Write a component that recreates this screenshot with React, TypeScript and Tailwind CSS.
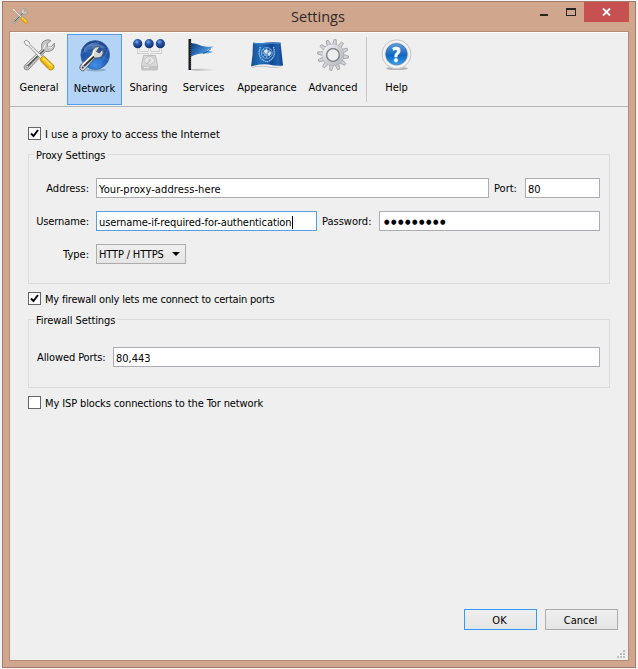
import type { ReactNode } from "react";

type ToolbarItem = {
    label: string;
    icon: ReactNode;
    width: string;
    active?: boolean;
};

function ToolsIcon({ className = "size-8" }: { className?: string }) {
    return (
        <svg viewBox="0 0 32 32" className={className}>
            <path d="M4 31Q1 31 1 28l1-2L19 10Q17 4 22 1.500q3-1.500 6 0L24 5l1 3 3 0 3.500-4q.5 5-2 7-3 2-7 1.500L7 29Q6 31 4 31Z" fill="#c4c4c4" stroke="#8a8a8a" strokeWidth=".9" />
            <path d="M4 27.500 21 10.500" stroke="#5c5c5c" strokeWidth="2.200" />
            <path d="m3.500 26 17-16 2-5" stroke="#f4f4f4" strokeWidth="1" fill="none" />
            <path d="m25 8 3 1 2-2" stroke="#eee" fill="none" />
            <circle cx="4.200" cy="27.700" r="1.200" fill="#eee" stroke="#555" strokeWidth=".5" />
            <path d="m1 3 2-2 3 2 .5 2L21 19l-2 2L5 6.500 3 6Z" fill="#f4f4f4" stroke="#8b8b8b" strokeWidth=".9" />
            <path d="m17 20 3-3.500 3 2.500 7.500 7q1.500 2-.5 4t-4 .5L18.500 23Z" fill="#f5bd12" stroke="#a57c13" strokeWidth=".8" />
            <path d="m20 19 9 8.500" stroke="#ffe675" strokeWidth="1.500" />
            <path d="m18 21.500 7.500 7.500" stroke="#c6860a" strokeWidth="1" />
        </svg>
    );
}

function NetworkIcon() {
    return (
        <svg viewBox="0 0 32 32" className="size-8">
            <defs>
                <radialGradient id="globe" cx=".5" cy=".85" r=".85">
                    <stop offset="0" stopColor="#3f91ed" />
                    <stop offset=".45" stopColor="#2260b9" />
                    <stop offset="1" stopColor="#1b3f80" />
                </radialGradient>
            </defs>
            <ellipse cx="17" cy="30" rx="10" ry="1.500" fill="#6e8eb5" opacity=".6" />
            <circle cx="16.200" cy="15" r="14.400" fill="url(#globe)" stroke="#3d65a5" strokeWidth=".7" />
            <path d="M3.500 14Q8 2 20 2.500M8 6q10-3 19 4M12 4q9 7 10 24M4 12q10-2 25 8M29 9q-3 12-14 18" fill="none" stroke="#5282ca" strokeWidth=".6" />
            <path d="M5 8q10-10 22 0-11-2-22 4Z" fill="#a9c5f2" opacity=".3" />
            <path d="M1 29Q0 27 2.500 24L12.500 14.500q0-5 4-7.500l4.500-.5-3.500 5 3 1.500 3-4q2 4.500-1 7.500-2 2-6.500 1.500L6 29.500q-2.500 3-5-.5Z" fill="#d4d6d7" stroke="#4c535b" strokeWidth=".9" />
            <path d="m5 26 10-9.500" stroke="#33383d" strokeWidth="2" />
            <path d="m4 24.500 10-9.500 1.500-5" fill="none" stroke="#fff" strokeWidth="1.200" />
            <circle cx="3.700" cy="27.500" r="1" fill="#26384f" />
        </svg>
    );
}

function SharingIcon() {
    return (
        <svg viewBox="0 0 32 32" className="size-8">
            <defs>
                <radialGradient id="ball" cx=".4" cy=".3" r=".7">
                    <stop offset="0" stopColor="#7aa4e4" />
                    <stop offset=".4" stopColor="#2857ab" />
                    <stop offset="1" stopColor="#102d6a" />
                </radialGradient>
            </defs>
            <path d="M5.500 8v5.500h22V8M16.500 7v11" fill="none" stroke="#c2c2c2" strokeWidth="3" />
            <path d="M5.500 8v5.500h22V8M16.500 7v11" fill="none" stroke="#f3f3f3" strokeWidth="1.600" />
            <circle cx="4.700" cy="4.700" r="4.600" fill="url(#ball)" />
            <circle cx="16.200" cy="4.700" r="4.600" fill="url(#ball)" />
            <circle cx="27.400" cy="4.700" r="4.600" fill="url(#ball)" />
            <path d="M10.500 16.500h12l2 9.500v4q0 1-1 1h-14q-1 0-1-1v-4Z" fill="#d8d8d8" stroke="#adadad" strokeWidth=".7" />
            <ellipse cx="16.500" cy="21.500" rx="5" ry="3.700" fill="#e8e8e8" stroke="#bbb" strokeWidth=".7" />
            <circle cx="16.500" cy="21" r="1.200" fill="#c4c4c4" />
            <path d="m13 25 4-3" stroke="#b5b5b5" />
            <path d="M9 27h15v3.500H9Z" fill="#c3c3c3" />
            <path d="M11 28.500h5" stroke="#eee" />
        </svg>
    );
}

function ServicesIcon() {
    return (
        <svg viewBox="0 0 32 32" className="size-8">
            <defs>
                <linearGradient id="pennant" x2="1" y2=".5">
                    <stop offset="0" stopColor="#143d70" />
                    <stop offset=".45" stopColor="#2a6cb6" />
                    <stop offset="1" stopColor="#5eaaf0" />
                </linearGradient>
                <linearGradient id="pole-shadow">
                    <stop offset="0" stopColor="#aaa" />
                    <stop offset="1" stopColor="#eee" />
                </linearGradient>
            </defs>
            <ellipse cx="15" cy="30.800" rx="12" ry="1" fill="url(#pole-shadow)" />
            <path d="M3 4q6 .5 11 3 5 1.500 11.500.2-3 2.300-6.500 4.300l6.500 1.500q-5 1.500-10 1.500-5-.5-12.500 3Z" fill="url(#pennant)" />
            <path d="M15 14.500q5-1.500 8-5" fill="none" stroke="#194a84" strokeWidth=".8" />
            <path d="M1.800 0v31" stroke="#151a1e" strokeWidth="2.600" />
            <path d="M2.400 2v28" stroke="#59636a" strokeWidth=".7" strokeDasharray="1 1" />
        </svg>
    );
}

function AppearanceIcon() {
    return (
        <svg viewBox="0 0 32 32" className="size-8">
            <defs>
                <linearGradient id="flag">
                    <stop offset="0" stopColor="#174c92" />
                    <stop offset=".3" stopColor="#2270bd" />
                    <stop offset=".65" stopColor="#114a96" />
                    <stop offset=".85" stopColor="#2062b0" />
                    <stop offset="1" stopColor="#0b3d84" />
                </linearGradient>
            </defs>
            <path d="M1 28q7-2 14-1 9 2 16 0l-1 1q-7 2-15 0-7-1-14 1Z" fill="#aaa" opacity=".6" />
            <path d="M2 3.500q7 1 13 0 8-.5 14.500 0l2.500 23q-7 1-14-1-8-1-18 2Q2 16 2 3.500Z" fill="url(#flag)" />
            <path d="M2 4.500q7 1 13 0 8-.5 15 0" fill="none" stroke="#4e8dca" strokeWidth=".8" />
            <g fill="none" stroke="#8fb8e2" strokeWidth=".8">
                <circle cx="15.800" cy="14" r="5.500" />
                <circle cx="15.800" cy="14" r="3" />
                <path d="M10.500 14h10.600M15.800 9v10M12 10l7.600 8M19.500 10l-7.500 8" />
                <path d="M9.500 8q-4.500 11 6.500 15Q26 19 22.500 8" strokeWidth="1.500" strokeDasharray="1.500 .6" />
            </g>
            <path d="m12.500 12 3-2 1.500 2-2 3Zm4 3 3-3 .5 3-2 2Z" fill="#d8e8f8" />
        </svg>
    );
}

const gearTeeth = [0, 30, 60, 90, 120, 150, 180, 210, 240, 270, 300, 330];

function AdvancedIcon() {
    return (
        <svg viewBox="0 0 32 32" className="size-8">
            <defs>
                <linearGradient id="gear" x2="1" y2="1">
                    <stop offset="0" stopColor="#f2f2f5" />
                    <stop offset=".5" stopColor="#cfd0d6" />
                    <stop offset="1" stopColor="#b9bac1" />
                </linearGradient>
            </defs>
            {gearTeeth.map((angle) => (
                <path
                    key={angle}
                    d="M14 6 14.900.5h2.200L18 6Z"
                    transform={`rotate(${angle + 8} 16 16)`}
                    fill="#d2d2d8"
                    stroke="#96969e"
                    strokeWidth=".7"
                />
            ))}
            <circle cx="16" cy="16" r="8.800" fill="none" stroke="#96969e" strokeWidth="4.600" />
            <circle cx="16" cy="16" r="8.800" fill="none" stroke="url(#gear)" strokeWidth="4" />
            <circle cx="16" cy="16" r="6.300" fill="#efefef" stroke="#7f8088" strokeWidth="1.300" />
        </svg>
    );
}

function HelpIcon() {
    return (
        <svg viewBox="0 0 32 32" className="size-8">
            <defs>
                <linearGradient id="help" x2="0" y2="1">
                    <stop offset="0" stopColor="#5e9cdc" />
                    <stop offset=".5" stopColor="#1a6cc2" />
                    <stop offset=".55" stopColor="#0b66c0" />
                    <stop offset="1" stopColor="#38a2ef" />
                </linearGradient>
            </defs>
            <ellipse cx="16" cy="29.500" rx="11" ry="1.600" fill="#b4b4b4" />
            <circle cx="15.500" cy="15.200" r="14.500" fill="#e4e4e4" stroke="#cacaca" />
            <circle cx="15.500" cy="15.200" r="12.800" fill="none" stroke="#f7f7f7" strokeWidth="1.300" />
            <circle cx="15.500" cy="15.200" r="10.800" fill="url(#help)" stroke="#3973b2" strokeWidth=".6" />
            <text x="15.500" y="22.500" textAnchor="middle" fill="#fff" stroke="#fff" strokeWidth=".5" className="font-['Open_Sans',sans-serif] text-[21px] font-bold">
                ?
            </text>
        </svg>
    );
}

const toolbarItems: ToolbarItem[] = [
    { label: "General", icon: <ToolsIcon />, width: "w-14" },
    { label: "Network", icon: <NetworkIcon />, width: "w-[55px]", active: true },
    { label: "Sharing", icon: <SharingIcon />, width: "w-[53px]" },
    { label: "Services", icon: <ServicesIcon />, width: "w-[57px]" },
    { label: "Appearance", icon: <AppearanceIcon />, width: "w-[70px]" },
    { label: "Advanced", icon: <AdvancedIcon />, width: "w-[62px]" },
];

function ToolbarButton({ item }: { item: ToolbarItem }) {
    return (
        <button
            className={`flex h-[71px] shrink-0 flex-col items-center border ${item.width} ${
                item.active ? "border-[#569de5] bg-[#b3d4f4] pt-[5px]" : "border-transparent pt-1"
            }`}
        >
            {item.icon}
            <span className="mt-[9px] whitespace-nowrap leading-4">{item.label}</span>
        </button>
    );
}

function CheckRow({ label, tracking, checked }: { label: string; tracking?: string; checked?: boolean }) {
    return (
        <label className="flex h-[13px] items-center gap-1">
            <span className="size-[13px] shrink-0 border border-[#646464] bg-white">
                {checked && (
                    <svg viewBox="0 0 11 11" className="size-[11px]">
                        <path d="M2 5.500 4.500 8 9 2" fill="none" stroke="#000" strokeWidth="2" />
                    </svg>
                )}
            </span>
            <span className={`pt-0.5 whitespace-nowrap ${tracking ?? ""}`}>{label}</span>
        </label>
    );
}

function Field({ value, width, text, focused }: { value: string; width: string; text?: string; focused?: boolean }) {
    return (
        <div
            className={`flex h-5 shrink-0 items-center border bg-white pt-0.5 whitespace-nowrap ${width} ${text ?? "pl-0.5"} ${
                focused ? "border-[#569de5]" : "border-[#abadb3]"
            }`}
        >
            {value}
            {focused && <span className="h-[13px] w-px bg-black" />}
        </div>
    );
}

function Group({ title, height, children }: { title: string; height: string; children: ReactNode }) {
    return (
        <section className={`w-[582px] border border-[#dcdcdc] ${height}`}>
            <h2 className="-mt-[7px] ml-[5px] h-[15px] w-fit bg-[#efefef] px-0.5 leading-[15px] tracking-[-0.1px]">{title}</h2>
            {children}
        </section>
    );
}

export default function App() {
    return (
        <div className="h-[669px] w-[638px] overflow-hidden bg-[#f4f4f4] pt-px pl-0.5 font-['DejaVu_Sans_Condensed','DejaVu_Sans',sans-serif] text-[11px] leading-[13px] text-black [font-stretch:condensed]">
            <div className="flex h-[667px] w-[634px] flex-col border border-[#a07c69] bg-[#d0a68c]">
                <header className="flex h-[29px] shrink-0 pr-1.5">
                    <div className="w-[100px] pt-1.5 pl-[9px]">
                        <ToolsIcon className="size-4" />
                    </div>
                    <h1 className="grow pt-1 text-center font-['Open_Sans',sans-serif] text-[14.500px] leading-[22px] text-[#2b2b2b] [font-stretch:normal]">
                        Settings
                    </h1>
                    <div className="flex w-[96px]">
                        <span className="mt-3 ml-[7px] h-0.5 w-2 bg-[#252525]" />
                        <span className="mt-[6px] ml-[18px] h-2 w-2.5 border border-t-2 border-[#252525]" />
                        <button className="ml-2 flex h-5 w-[45px] items-center justify-center bg-[#c75050]">
                            <svg viewBox="0 0 9 8" className="h-2 w-[9px]">
                                <path d="m1 .5 7 7m0-7-7 7" stroke="#fff" strokeWidth="1.800" />
                            </svg>
                        </button>
                    </div>
                </header>

                <main className="ml-1.5 flex h-[630px] w-[620px] shrink-0 flex-col border border-[#b58d77] bg-[#efefef]">
                    <nav className="flex h-[75px] shrink-0 border-t border-b border-t-white border-b-[#b5b5b5] pt-px pl-px">
                        {toolbarItems.map((item) => (
                            <ToolbarButton key={item.label} item={item} />
                        ))}
                        <span className="mt-[3px] mr-0.5 ml-[2px] h-[65px] w-px bg-[#cacaca]" />
                        <ToolbarButton item={{ label: "Help", icon: <HelpIcon />, width: "w-[55px]" }} />
                    </nav>

                    <div className="flex grow flex-col pt-5 pl-[18px]">
                        <CheckRow label="I use a proxy to access the Internet" checked />
                        <div className="mt-[14px]">
                            <Group title="Proxy Settings" height="h-[130px]">
                                <div className="mt-[15px] flex h-5 items-center">
                                    <span className="w-[60px] text-right">Address:</span>
                                    <span className="w-[7px]" />
                                    <Field value="Your-proxy-address-here" width="w-[393px]" text="pl-0.5 tracking-[0.1px]" />
                                    <span className="w-9 pl-[5px]">Port:</span>
                                    <Field value="80" width="w-[75px]" />
                                </div>
                                <div className="mt-[13px] flex h-5 items-center">
                                    <span className="w-[60px] text-right tracking-[-0.1px]">Username:</span>
                                    <span className="w-[7px]" />
                                    <Field
                                        value="username-if-required-for-authentication"
                                        width="w-[221px]"
                                        text="pl-0.5 tracking-[-0.08px]"
                                        focused
                                    />
                                    <span className="w-[62px] pl-[5px]">Password:</span>
                                    <Field value="●●●●●●●●●" width="w-[221px]" text="pl-1 text-[7px] tracking-[1.5px]" />
                                </div>
                                <div className="mt-[13px] flex h-5 items-center">
                                    <span className="w-[60px] text-right">Type:</span>
                                    <button className="ml-[7px] flex h-5 w-[90px] items-center justify-between border border-[#acacac] bg-linear-to-b from-[#efefef] to-[#e5e5e5] pr-[5px] pl-0.5 tracking-[-0.15px]">
                                        HTTP / HTTPS
                                        <svg viewBox="0 0 8 4" className="h-1 w-2">
                                            <path d="M0 0h8L4 4Z" />
                                        </svg>
                                    </button>
                                </div>
                            </Group>
                        </div>
                        <div className="mt-2">
                            <CheckRow label="My firewall only lets me connect to certain ports" tracking="tracking-[-0.2px]" checked />
                        </div>
                        <div className="mt-[14px]">
                            <Group title="Firewall Settings" height="h-[69px]">
                                <div className="mt-[19px] flex h-5 items-center pl-2">
                                    <span className="w-[76px] tracking-[-0.1px]">Allowed Ports:</span>
                                    <Field value="80,443" width="w-[487px]" />
                                </div>
                            </Group>
                        </div>
                        <div className="mt-2">
                            <CheckRow label="My ISP blocks connections to the Tor network" tracking="tracking-[-0.12px]" />
                        </div>
                    </div>

                    <footer className="flex h-[51px] shrink-0 justify-end gap-2 pr-[10px]">
                        <button className="h-[21px] w-[73px] border border-[#3399ff] bg-linear-to-b from-[#efefef] to-[#e5e5e5] pt-0.5 pr-0.5">
                            OK
                        </button>
                        <button className="h-[21px] w-[73px] border border-[#acacac] bg-linear-to-b from-[#efefef] to-[#e5e5e5] pt-0.5 pr-0.5">
                            Cancel
                        </button>
                        <svg viewBox="0 0 8 8" className="-mr-[7px] -ml-[9px] size-2 translate-y-[41px] fill-[#bfbfbf]">
                            <path d="M6 0h2v2H6ZM3 3h2v2H3Zm3 0h2v2H6ZM0 6h2v2H0Zm3 0h2v2H3Zm3 0h2v2H6Z" />
                        </svg>
                    </footer>
                </main>
            </div>
        </div>
    );
}
